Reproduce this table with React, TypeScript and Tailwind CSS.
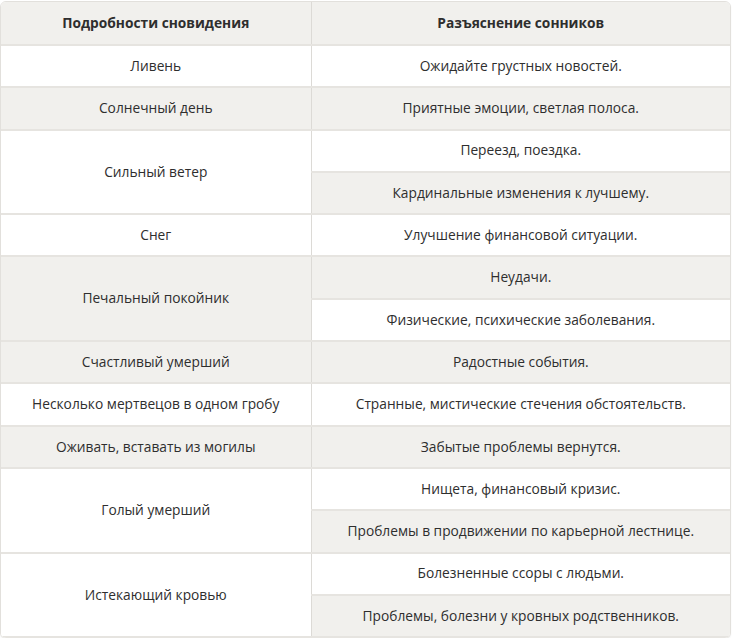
import React from 'react'

type Row = { left?: string; span?: number; right: string }

const ROWS: Row[] = [
  { left: 'Ливень', right: 'Ожидайте грустных новостей.' },
  { left: 'Солнечный день', right: 'Приятные эмоции, светлая полоса.' },
  { left: 'Сильный ветер', span: 2, right: 'Переезд, поездка.' },
  { right: 'Кардинальные изменения к лучшему.' },
  { left: 'Снег', right: 'Улучшение финансовой ситуации.' },
  { left: 'Печальный покойник', span: 2, right: 'Неудачи.' },
  { right: 'Физические, психические заболевания.' },
  { left: 'Счастливый умерший', right: 'Радостные события.' },
  { left: 'Несколько мертвецов в одном гробу', right: 'Странные, мистические стечения обстоятельств.' },
  { left: 'Оживать, вставать из могилы', right: 'Забытые проблемы вернутся.' },
  { left: 'Голый умерший', span: 2, right: 'Нищета, финансовый кризис.' },
  { right: 'Проблемы в продвижении по карьерной лестнице.' },
  { left: 'Истекающий кровью', span: 2, right: 'Болезненные ссоры с людьми.' },
  { right: 'Проблемы, болезни у кровных родственников.' },
]

export default function App() {
  return (
    <div className="bg-white w-[733px] h-[638px] pt-[1px] pr-[2px] font-['Open_Sans',sans-serif] text-[13.75px] text-[#2e2e2e]">
      <div className="rounded-[6px] border border-[#e2e0dc] overflow-hidden shadow-[0_1px_2px_rgba(0,0,0,0.06)]">
        <table className="w-full border-collapse table-fixed">
          <colgroup>
            <col className="w-[310px]" />
            <col />
          </colgroup>
          <thead>
            <tr className="bg-[#f1f0ed]">
              <th className="h-[43px] font-bold text-center border-r border-[#dcdad6] border-b-2 border-b-[#e6e4e0]">
                Подробности сновидения
              </th>
              <th className="h-[43px] font-bold text-center border-b-2 border-b-[#e6e4e0]">
                Разъяснение сонников
              </th>
            </tr>
          </thead>
          <tbody>
            {ROWS.map((r, i) => (
              <tr key={i} className={i % 2 === 1 ? 'bg-[#f1f0ed]' : 'bg-white'}>
                {r.left && (
                  <td
                    rowSpan={r.span ?? 1}
                    className="text-center align-middle border-r border-[#dcdad6] border-b-2 border-b-[#e6e4e0]"
                  >
                    {r.left}
                  </td>
                )}
                <td className="h-[42.3px] text-center align-middle border-b-2 border-b-[#e6e4e0]">
                  {r.right}
                </td>
              </tr>
            ))}
          </tbody>
        </table>
      </div>
    </div>
  )
}
